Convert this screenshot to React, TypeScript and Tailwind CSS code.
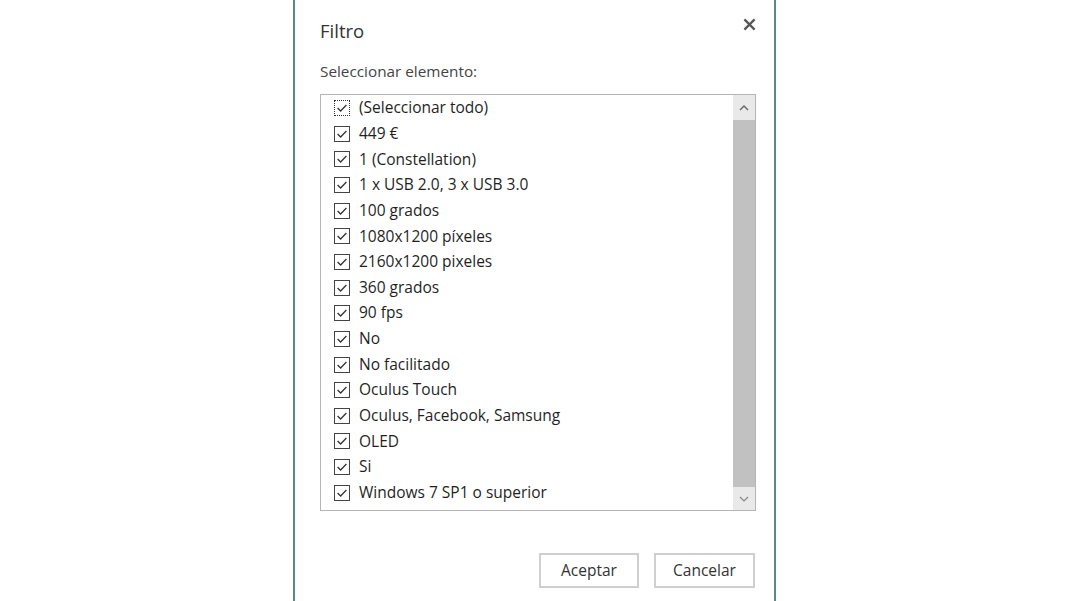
const items = [
  "449 €",
  "1 (Constellation)",
  "1 x USB 2.0, 3 x USB 3.0",
  "100 grados",
  "1080x1200 píxeles",
  "2160x1200 pixeles",
  "360 grados",
  "90 fps",
  "No",
  "No facilitado",
  "Oculus Touch",
  "Oculus, Facebook, Samsung",
  "OLED",
  "Si",
  "Windows 7 SP1 o superior",
];

const CheckBox = ({ dotted }: { dotted?: boolean }) => (
  <span
    className={
      "relative w-[16px] h-[16px] shrink-0 " +
      (dotted ? "border-[1.5px] border-dotted border-[#333]" : "border border-[#444]")
    }
  >
    <svg
      viewBox="0 0 16 16"
      className="absolute -left-px -top-px w-[16px] h-[16px]"
      fill="none"
      stroke="#333"
      strokeWidth="1.3"
    >
      <path d="M3.6 8 L6.6 11 L12.4 5" />
    </svg>
  </span>
);

const Row = ({ label, dotted }: { label: string; dotted?: boolean }) => (
  <div className="flex items-center h-[25.65px] pl-[13px] gap-[9px]">
    <CheckBox dotted={dotted} />
    <span className="text-[15.5px] text-[#1f1f1f] leading-none whitespace-nowrap">
      {label}
    </span>
  </div>
);

export default function App() {
  return (
    <div
      className="w-[1080px] h-[601px] bg-white overflow-hidden"
      style={{ fontFamily: '"Open Sans", "Noto Sans", sans-serif' }}
    >
      <div className="ml-[293px] w-[483px] h-full border-x-2 border-[#5c8b78] flex flex-col pl-[25px] pr-[19px]">
        <div className="flex items-center justify-between pt-[19px] h-[43px]">
          <span className="text-[18.5px] text-[#333] leading-none">Filtro</span>
          <svg
            viewBox="0 0 14 14"
            className="w-[13px] h-[13px] mr-[-1px] mt-[-14px]"
            stroke="#555"
            strokeWidth="2.4"
          >
            <path d="M1.5 1.5 L12.5 12.5 M12.5 1.5 L1.5 12.5" />
          </svg>
        </div>
        <div className="pt-[21px] text-[15.3px] text-[#444] leading-none">
          Seleccionar elemento:
        </div>
        <div className="mt-[15px] w-[436px] h-[417px] border border-[#b5b5b5] flex">
          <div className="flex-1 flex flex-col">
            <Row label="(Seleccionar todo)" dotted />
            {items.map((it) => (
              <Row key={it} label={it} />
            ))}
          </div>
          <div className="w-[22px] flex flex-col bg-[#e9e9e9]">
            <div className="h-[25px] flex items-center justify-center">
              <svg viewBox="0 0 10 6" className="w-[10px] h-[6px]" fill="none" stroke="#666" strokeWidth="1.4">
                <path d="M1 5 L5 1 L9 5" />
              </svg>
            </div>
            <div className="flex-1 bg-[#c1c1c1]" />
            <div className="h-[23px] flex items-center justify-center">
              <svg viewBox="0 0 10 6" className="w-[10px] h-[6px]" fill="none" stroke="#888" strokeWidth="1.2">
                <path d="M1 1 L5 5 L9 1" />
              </svg>
            </div>
          </div>
        </div>
        <div className="flex justify-end gap-[15px] mt-[42px]">
          <button className="w-[100px] h-[35px] border-2 border-[#cfcfcf] bg-white text-[15.5px] text-[#333]">
            Aceptar
          </button>
          <button className="w-[101px] h-[35px] border-2 border-[#cfcfcf] bg-white text-[15.5px] text-[#333]">
            Cancelar
          </button>
        </div>
      </div>
    </div>
  );
}
